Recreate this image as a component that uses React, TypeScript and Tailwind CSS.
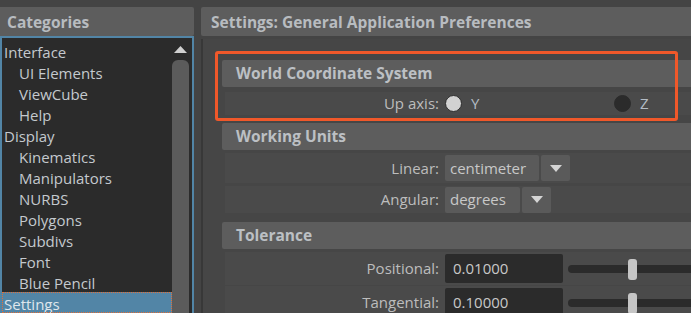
const font = { fontFamily: '"Open Sans", "Noto Sans", sans-serif' }

const categories: { label: string; indent?: boolean; selected?: boolean }[] = [
  { label: 'Interface' },
  { label: 'UI Elements', indent: true },
  { label: 'ViewCube', indent: true },
  { label: 'Help', indent: true },
  { label: 'Display' },
  { label: 'Kinematics', indent: true },
  { label: 'Manipulators', indent: true },
  { label: 'NURBS', indent: true },
  { label: 'Polygons', indent: true },
  { label: 'Subdivs', indent: true },
  { label: 'Font', indent: true },
  { label: 'Blue Pencil', indent: true },
  { label: 'Settings', selected: true },
]

function SectionHeader({ title }: { title: string }) {
  return (
    <div className="flex h-[27px] shrink-0 items-center rounded-[2px] bg-[#5d5d5d] pl-[14px] pt-[1px] text-[15.5px] font-bold text-[#bcc0c4]">
      {title}
    </div>
  )
}

function Row({ label, children, className }: { label: string; children: React.ReactNode; className?: string }) {
  return (
    <div className={`mx-[3px] flex shrink-0 items-center bg-[#4a4a4a] ${className ?? ''}`}>
      <div className="w-[220px] shrink-0 pr-[6px] text-right text-[15px] text-[#bdbdbd]">{label}</div>
      {children}
    </div>
  )
}

function Dropdown({ value, width }: { value: string; width: number }) {
  return (
    <div className="flex h-[26px] gap-[2px]">
      <div
        className="flex items-center rounded-[2px] bg-[#5a5a5a] pl-[5px] text-[15px] text-[#c8c8c8]"
        style={{ width }}
      >
        {value}
      </div>
      <div className="flex w-[29px] items-center justify-center rounded-[2px] bg-[#5a5a5a]">
        <svg width="12" height="7" viewBox="0 0 12 7">
          <path d="M0 0h12L6 7z" fill="#d4d4d4" />
        </svg>
      </div>
    </div>
  )
}

function Radio({ label, checked, width }: { label: string; checked?: boolean; width?: number }) {
  return (
    <div className="flex shrink-0 items-center" style={{ width }}>
      <span
        className={`block h-[17px] w-[17px] shrink-0 rounded-full border-[1.5px] ${
          checked ? 'border-[#2e2e2e] bg-[#d2d2d2]' : 'border-[#2b2b2b] bg-[#2b2b2b]'
        }`}
      />
      <span className="ml-[9px] text-[15px] text-[#b4bcc4]">{label}</span>
    </div>
  )
}

function FloatSlider({ value }: { value: string }) {
  return (
    <div className="flex items-center">
      <div className="flex h-[29px] w-[118px] items-center rounded-[2px] bg-[#2b2b2b] pl-[8px] text-[15px] text-[#c8c8c8]">
        {value}
      </div>
      <div className="relative ml-[5px] h-[8px] w-[140px] rounded-l-full bg-[#2b2b2b]">
        <div className="absolute left-[60px] top-[-6px] h-[21px] w-[9px] rounded-[3px] bg-[#c6c6c6]" />
      </div>
    </div>
  )
}

export default function App() {
  return (
    <div className="flex h-[313px] w-[691px] overflow-hidden bg-[#444444] pt-[7px]" style={font}>
      <div className="flex min-h-0 w-[194px] shrink-0 flex-col">
        <div className="flex h-[29px] shrink-0 items-center rounded-r-[2px] bg-[#5d5d5d] pl-[7px] pt-[2px] text-[15.5px] font-bold text-[#b8bcc0]">
          Categories
        </div>
        <div className="flex min-h-0 flex-1 border-2 border-b-0 border-[#5285a6] bg-[#2b2b2b]">
          <div className="flex-1 pt-[2px]">
            {categories.map((c) => (
              <div
                key={c.label}
                className={`flex h-[21px] items-center pt-[3px] text-[15px] leading-none ${c.indent ? 'pl-[17px]' : 'pl-[2px]'} ${
                  c.selected ? 'bg-[#5285a6] text-[#dfe6ec] outline-1 outline-dotted outline-[#e0703a] -outline-offset-1' : 'text-[#c4c9ce]'
                }`}
              >
                {c.label}
              </div>
            ))}
          </div>
          <div className="mr-[3px] flex w-[17px] flex-col items-center">
            <svg className="mt-[8px]" width="13" height="7" viewBox="0 0 13 7">
              <path d="M6.5 0L13 7H0z" fill="#d0d0d0" />
            </svg>
            <div className="mt-[7px] w-full flex-1 rounded-t-[6px] bg-[#5b5b5b]" />
          </div>
        </div>
      </div>

      <div className="ml-[7px] flex min-h-0 flex-1 flex-col">
        <div className="flex h-[29px] shrink-0 items-center rounded-l-[2px] bg-[#5d5d5d] pl-[10px] pt-[2px] text-[15.5px] font-bold text-[#b8bcc0]">
          Settings: General Application Preferences
        </div>
        <div className="flex min-h-0 flex-1 pt-[3px]">
          <div className="w-[2px] bg-[#383838]" />
          <div className="flex flex-1 flex-col bg-[#464646] pl-[19px] pt-[21px]">
            <div className="relative shrink-0">
              <div className="pointer-events-none absolute left-[-7px] top-[-9px] h-[70px] w-[463px] rounded-[3px] border-[3px] border-[#f0582a]" />
              <SectionHeader title="World Coordinate System" />
              <Row label="Up axis:" className="mt-[5px] h-[23px]">
                <Radio label="Y" checked width={169} />
                <Radio label="Z" />
              </Row>
            </div>

            <div className="mt-[8px] shrink-0">
              <SectionHeader title="Working Units" />
              <Row label="Linear:" className="mt-[3px] h-[30px]">
                <Dropdown value="centimeter" width={94} />
              </Row>
              <Row label="Angular:" className="mt-[3px] h-[27px]">
                <Dropdown value="degrees" width={75} />
              </Row>
            </div>

            <div className="mt-[9px] shrink-0">
              <SectionHeader title="Tolerance" />
              <Row label="Positional:" className="mt-[3px] h-[33px]">
                <FloatSlider value="0.01000" />
              </Row>
              <Row label="Tangential:" className="mt-[1px] h-[33px]">
                <FloatSlider value="0.10000" />
              </Row>
            </div>
          </div>
        </div>
      </div>
    </div>
  )
}
